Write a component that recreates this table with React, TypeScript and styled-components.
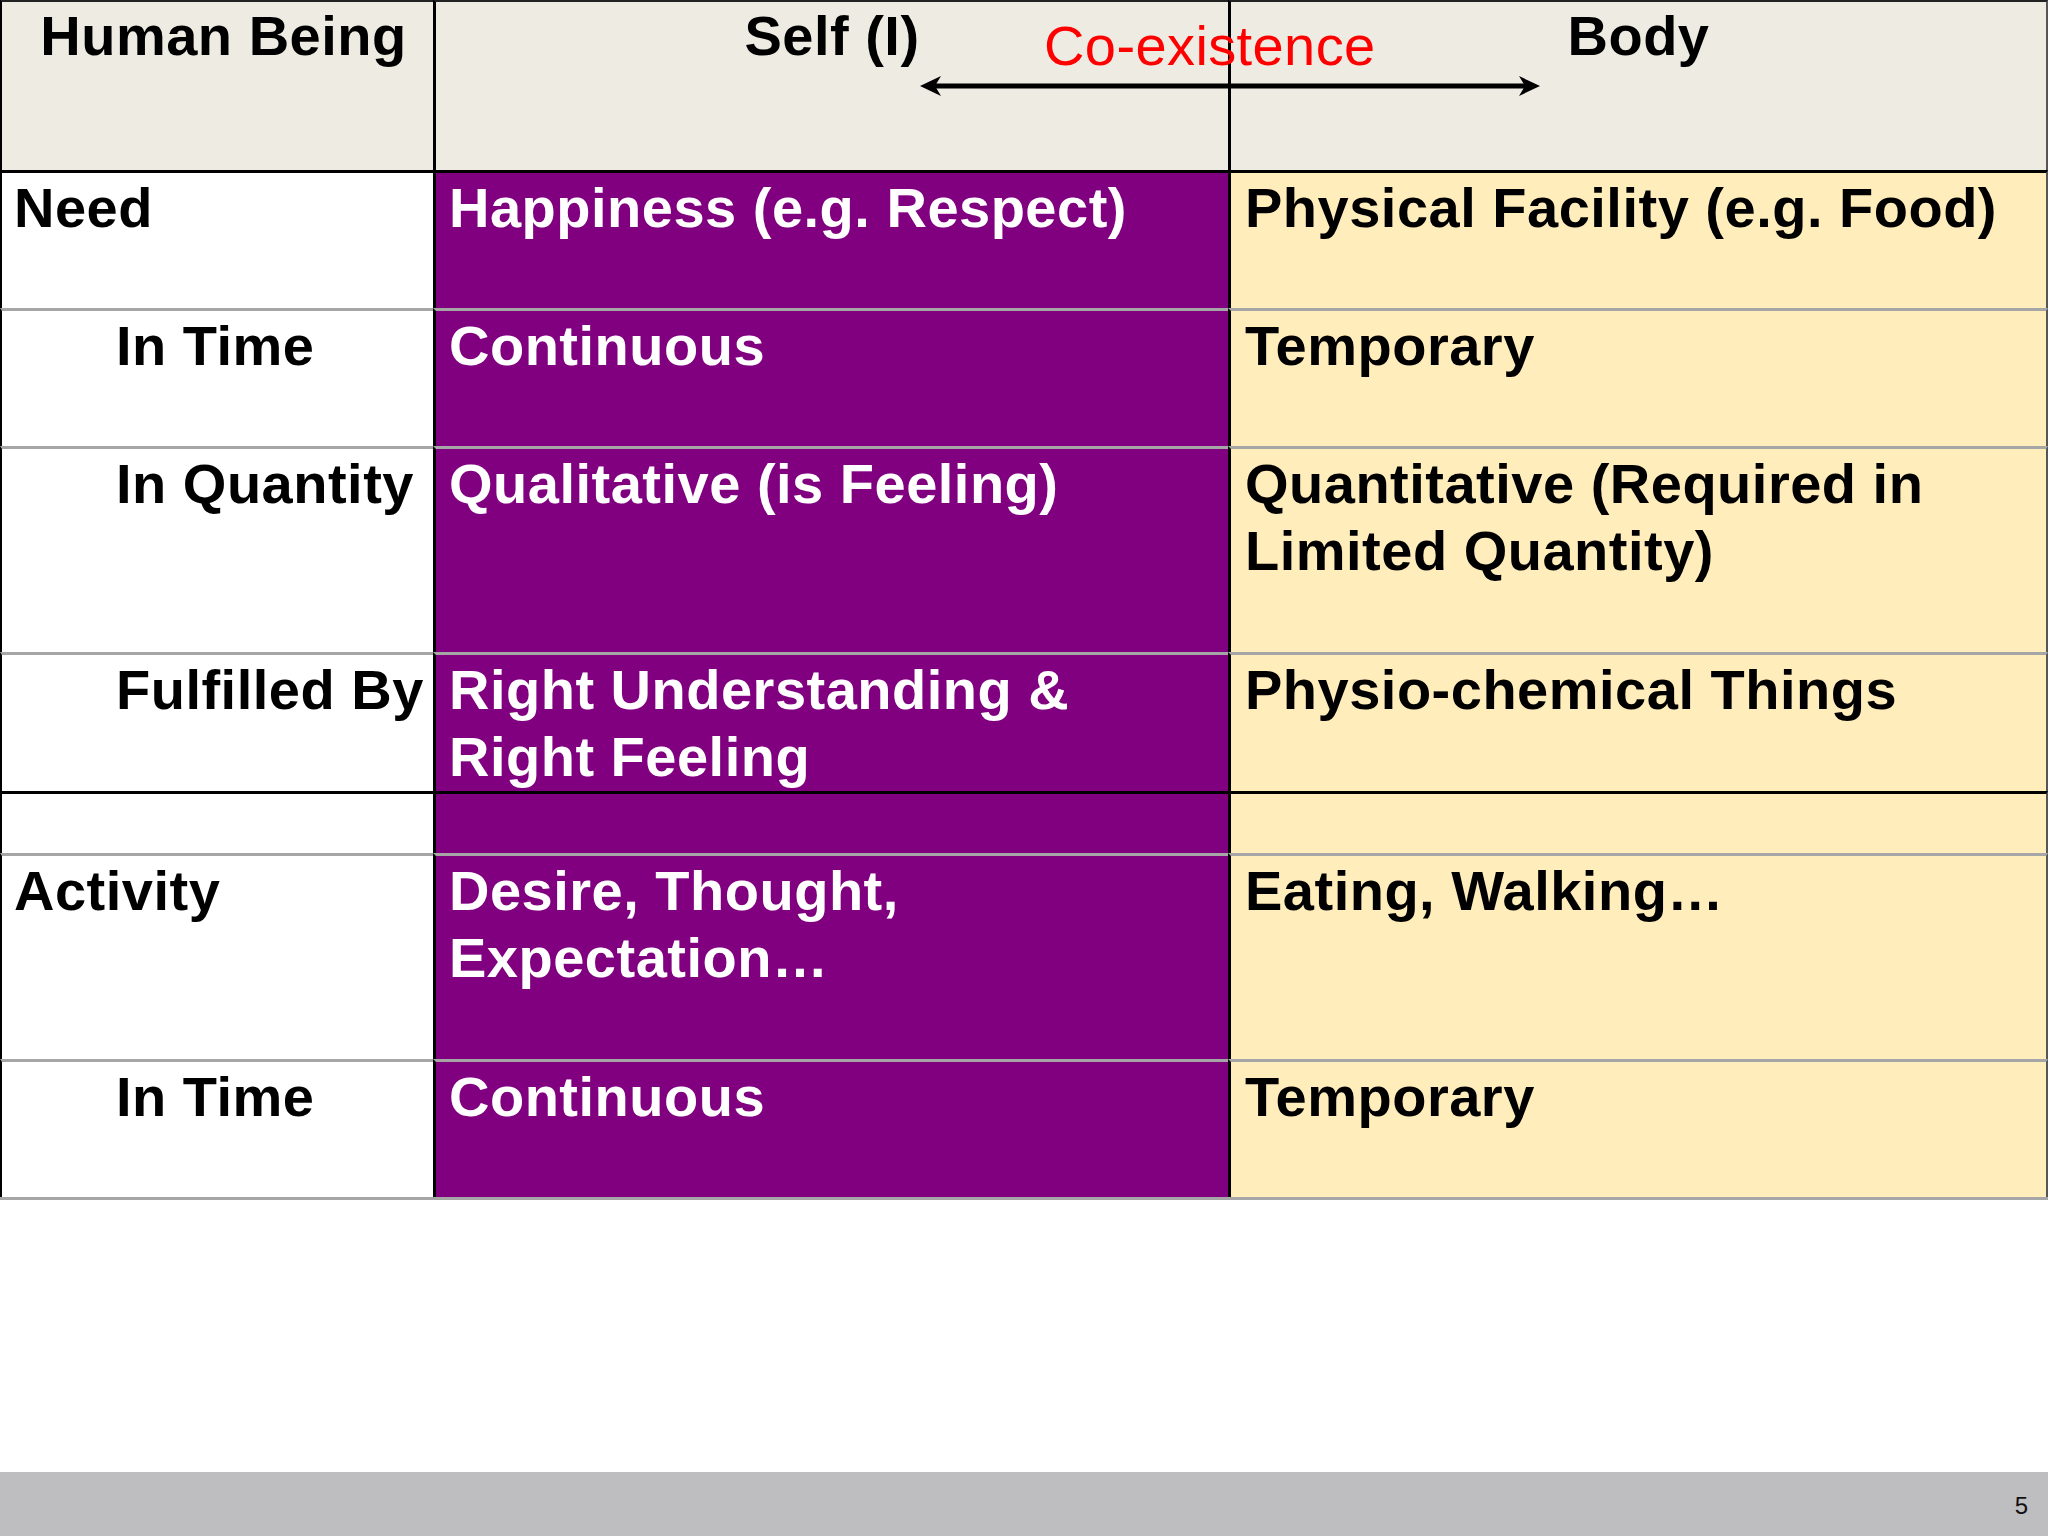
import styled, {createGlobalStyle} from "styled-components";

const GlobalStyle = createGlobalStyle`
  html, body {
    margin: 0;
    padding: 0;
    background: #ffffff;
  }
  body {
    font-family: "Liberation Sans", Arial, sans-serif;
  }
`;

const theme = {
  header: "#eeebe3",
  purple: "#800080",
  cream: "#ffedbb",
  grayLine: "#a6a6a6",
  black: "#000000",
  footer: "#bebdbf",
};

const Page = styled.div`
  width: 2048px;
  height: 1536px;
  display: flex;
  flex-direction: column;
  overflow: hidden;
`;

const Table = styled.div`
  position: relative;
  display: grid;
  grid-template-columns: 433px 795px 820px;
  grid-template-rows: 170px 138px 138px 206px 139px 62px 206px 138px;
  border-bottom: 3px solid ${theme.grayLine};
`;

const Cell = styled.div<{
  $bg: string;
  $color?: string;
  $line: string;
  $col: number;
  $indent?: boolean;
}>`
  box-sizing: border-box;
  background: ${(p) => p.$bg};
  color: ${(p) => p.$color || theme.black};
  border-top: 3px solid ${(p) => p.$line};
  border-left: ${(p) => (p.$col === 0 ? 2 : 3)}px solid ${theme.black};
  border-right: ${(p) => (p.$col === 2 ? "2px solid #555" : "none")};
  padding: 1px 0 0 ${(p) => (p.$indent ? 114 : p.$col === 0 ? 12 : p.$col === 1 ? 13 : 14)}px;
  font-size: 56px;
  font-weight: 700;
  letter-spacing: 0.5px;
  line-height: 67px;
  white-space: nowrap;
`;

const HeadCell = styled.div<{$col: number}>`
  box-sizing: border-box;
  background: ${theme.header};
  border-top: 2px solid #222;
  border-left: ${(p) => (p.$col === 0 ? 2 : 3)}px solid ${theme.black};
  border-right: ${(p) => (p.$col === 2 ? "2px solid #555" : "none")};
  padding-left: ${(p) => (p.$col === 0 ? 12 : 0)}px;
  text-align: center;
  font-size: 56px;
  font-weight: 700;
  letter-spacing: 0.5px;
  line-height: 67px;
  color: ${theme.black};
  white-space: nowrap;
`;

const CoExistence = styled.div`
  position: absolute;
  left: 1044px;
  top: 18px;
  font-size: 56px;
  line-height: 56px;
  font-weight: 400;
  letter-spacing: 0.4px;
  color: #ff0000;
  white-space: nowrap;
`;

const ArrowSvg = styled.svg`
  position: absolute;
  left: 918px;
  top: 73px;
`;

const Spacer = styled.div`
  flex: 1;
`;

const Footer = styled.footer`
  height: 64px;
  background: ${theme.footer};
  display: flex;
  justify-content: flex-end;
  padding: 22px 20px 0 0;
  box-sizing: border-box;
  font-size: 24px;
  line-height: 24px;
  color: #111;
`;

type Row = {
  label: string;
  indent?: boolean;
  self: string[];
  body: string[];
  line: string;
};

const rows: Row[] = [
  {label: "Need", self: ["Happiness (e.g. Respect)"], body: ["Physical Facility (e.g. Food)"], line: theme.black},
  {label: "In Time", indent: true, self: ["Continuous"], body: ["Temporary"], line: theme.grayLine},
  {
    label: "In Quantity",
    indent: true,
    self: ["Qualitative (is Feeling)"],
    body: ["Quantitative (Required in", "Limited Quantity)"],
    line: theme.grayLine,
  },
  {
    label: "Fulfilled By",
    indent: true,
    self: ["Right Understanding &", "Right Feeling"],
    body: ["Physio-chemical Things"],
    line: theme.grayLine,
  },
  {label: "", self: [], body: [], line: theme.black},
  {label: "Activity", self: ["Desire, Thought,", "Expectation…"], body: ["Eating, Walking…"], line: theme.grayLine},
  {label: "In Time", indent: true, self: ["Continuous"], body: ["Temporary"], line: theme.grayLine},
];

const Lines = ({lines}: {lines: string[]}) => (
  <>
    {lines.map((l, i) => (
      <div key={i}>{l}</div>
    ))}
  </>
);

const Arrow = () => (
  <ArrowSvg width="624" height="26" viewBox="0 0 624 26">
    <line x1="14" y1="13" x2="610" y2="13" stroke="#000" strokeWidth="5" />
    <path d="M2 13 L23 3 L17 13 L23 23 Z" fill="#000" />
    <path d="M622 13 L601 3 L607 13 L601 23 Z" fill="#000" />
  </ArrowSvg>
);

export default function App() {
  return (
    <Page>
      <GlobalStyle />
      <Table>
        <HeadCell $col={0}>Human Being</HeadCell>
        <HeadCell $col={1}>Self (I)</HeadCell>
        <HeadCell $col={2}>Body</HeadCell>
        {rows.map((r, i) => (
          <>
            <Cell key={`l${i}`} $bg="#ffffff" $line={r.line} $col={0} $indent={r.indent}>
              {r.label}
            </Cell>
            <Cell key={`s${i}`} $bg={theme.purple} $color="#ffffff" $line={r.line} $col={1}>
              <Lines lines={r.self} />
            </Cell>
            <Cell key={`b${i}`} $bg={theme.cream} $line={r.line} $col={2}>
              <Lines lines={r.body} />
            </Cell>
          </>
        ))}
        <CoExistence>Co-existence</CoExistence>
        <Arrow />
      </Table>
      <Spacer />
      <Footer>5</Footer>
    </Page>
  );
}
